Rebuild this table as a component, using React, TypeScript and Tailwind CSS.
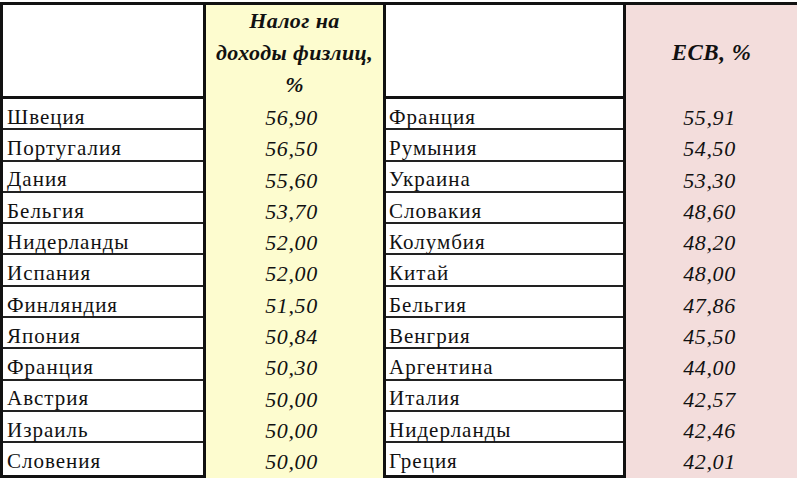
import React from "react";

type Row = { left: string; tax: string; right: string; esv: string };

const rows: Row[] = [
  { left: "Швеция", tax: "56,90", right: "Франция", esv: "55,91" },
  { left: "Португалия", tax: "56,50", right: "Румыния", esv: "54,50" },
  { left: "Дания", tax: "55,60", right: "Украина", esv: "53,30" },
  { left: "Бельгия", tax: "53,70", right: "Словакия", esv: "48,60" },
  { left: "Нидерланды", tax: "52,00", right: "Колумбия", esv: "48,20" },
  { left: "Испания", tax: "52,00", right: "Китай", esv: "48,00" },
  { left: "Финляндия", tax: "51,50", right: "Бельгия", esv: "47,86" },
  { left: "Япония", tax: "50,84", right: "Венгрия", esv: "45,50" },
  { left: "Франция", tax: "50,30", right: "Аргентина", esv: "44,00" },
  { left: "Австрия", tax: "50,00", right: "Италия", esv: "42,57" },
  { left: "Израиль", tax: "50,00", right: "Нидерланды", esv: "42,46" },
  { left: "Словения", tax: "50,00", right: "Греция", esv: "42,01" },
];

const cols = "grid grid-cols-[203px_180px_240px_171px]";

export default function App() {
  return (
    <div className="w-[800px] h-[484px] bg-white pt-[2px] [font-family:'Liberation_Serif',serif] text-[#111]">
      <div className="w-[797px] border-[3px] border-[#111]">
        {/* header */}
        <div className={`${cols} h-[94px] border-b-[3px] border-[#111]`}>
          <div className="border-r-[3px] border-[#111]" />
          <div className="border-r-[3px] border-[#111] bg-[#fdfccf] flex items-center justify-center text-center font-bold italic text-[22px] tracking-[0.4px] leading-[32px] pb-[3px]">
            <span>
              Налог на
              <br />
              доходы физлиц,
              <br />%
            </span>
          </div>
          <div className="border-r-[3px] border-[#111]" />
          <div className="bg-[#f3dddc] flex items-center justify-center font-bold italic text-[23px] tracking-[0.5px] pb-[3px]">
            ЕСВ, %
          </div>
        </div>

        {/* data rows */}
        {rows.map((r, i) => (
          <div
            key={i}
            className={`${cols} h-[31.3px] ${i < rows.length - 1 ? "border-b-2 border-[#222]" : ""}`}
          >
            <div className="border-r-[3px] border-[#111] pl-[4px] pt-[2px] flex items-center text-[21px] tracking-[1px]">
              {r.left}
            </div>
            <div className="border-r-[3px] border-[#111] bg-[#fdfccf] pt-[2px] flex items-center justify-center italic text-[22px] tracking-[0.6px] pr-[6px]">
              {r.tax}
            </div>
            <div className="border-r-[3px] border-[#111] pl-[3px] pt-[2px] flex items-center text-[21px] tracking-[1px]">
              {r.right}
            </div>
            <div className="bg-[#f3dddc] pt-[2px] flex items-center justify-center italic text-[22px] tracking-[0.6px] pr-[4px]">
              {r.esv}
            </div>
          </div>
        ))}
      </div>
    </div>
  );
}
